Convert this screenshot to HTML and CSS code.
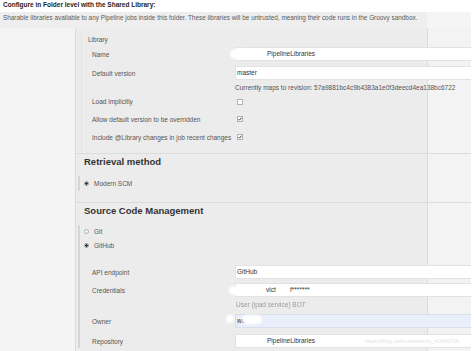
FILE: index.html
```html
<!DOCTYPE html>
<html>
<head>
<meta charset="utf-8">
<link rel="stylesheet" href="styles.css">
</head>
<body>
<div class="title">Configure in Folder level with the Shared Library:</div>
<div class="desc">Sharable libraries available to any Pipeline jobs inside this folder. These libraries will be untrusted, meaning their code runs in the Groovy sandbox.</div>
<div class="main">
  <div class="side"></div>
  <div class="content">
    <div class="lib">
      <div class="lib-title">Library</div>
      <div class="form">
        <div class="row r-in">
          <div class="label">Name</div>
          <div class="field"><div class="input"><span class="pre">-</span>PipelineLibraries</div><span class="blob b-name"></span></div>
        </div>
        <div class="row r-in gap5">
          <div class="label">Default version</div>
          <div class="field"><div class="input">master</div></div>
        </div>
        <div class="row r-info">
          <div class="label"></div>
          <div class="field info">Currently maps to revision: 57a9881bc4c9b4383a1e0f3deecd4ea138bc6722</div>
        </div>
        <div class="row r-load">
          <div class="label">Load implicitly</div>
          <div class="field"><span class="cb"></span></div>
        </div>
        <div class="row r-chk">
          <div class="label">Allow default version to be overridden</div>
          <div class="field"><span class="cb"><svg viewBox="0 0 6 6" width="4" height="4"><path d="M0.8 3.2 L2.4 4.8 L5.3 1" fill="none" stroke="#222" stroke-width="1.3"/></svg></span></div>
        </div>
        <div class="row r-chk">
          <div class="label">Include @Library changes in job recent changes</div>
          <div class="field"><span class="cb"><svg viewBox="0 0 6 6" width="4" height="4"><path d="M0.8 3.2 L2.4 4.8 L5.3 1" fill="none" stroke="#222" stroke-width="1.3"/></svg></span></div>
        </div>
      </div>
    </div>

    <div class="section s-retr">
      <h2>Retrieval method</h2>
      <div class="radios">
        <div class="radio r15"><span class="dot on"></span>Modern SCM</div>
      </div>
    </div>

    <div class="section s-scm">
      <h2>Source Code Management</h2>
      <div class="radios">
        <div class="radio r13"><span class="dot"></span>Git</div>
        <div class="radio r14"><span class="dot on"></span>GitHub</div>
        <div class="nested">
          <div class="row r-in">
            <div class="label">API endpoint</div>
            <div class="field"><div class="input">GitHub</div></div>
          </div>
          <div class="row r-in gap4">
            <div class="label">Credentials</div>
            <div class="field"><div class="input"><span class="pre c">&nbsp;</span><span class="user">vict</span>f*******</div><span class="blob b-cred"></span></div>
          </div>
          <div class="row r-user">
            <div class="label"></div>
            <div class="field hint">User (ipad service) BOT</div>
          </div>
          <div class="row r-in gap2">
            <div class="label">Owner</div>
            <div class="field"><div class="input auto">wu</div><span class="blob b-owner"></span><span class="blob b-owner2"></span></div>
          </div>
          <div class="row r-in gap6">
            <div class="label">Repository</div>
            <div class="field"><div class="input"><span class="pre">&nbsp;</span>PipelineLibraries</div><span class="mark">https://blog.csdn.net/weixin_41646716</span></div>
          </div>
        </div>
      </div>
    </div>
  </div>
  <div class="edge"></div>
</div>
</body>
</html>
```
FILE: styles.css
```css
* { box-sizing: border-box; margin: 0; padding: 0; }
html, body { width: 474px; height: 351px; overflow: hidden; background: #fff; }
body {
  font-family: "Liberation Sans", Arial, sans-serif;
  font-size: 6.5px;
  color: #555;
}
.title {
  height: 12px;
  line-height: 9px;
  padding-left: 3px;
  font-weight: bold;
  color: #1e1e1e;
  white-space: nowrap;
}
.desc {
  height: 16px;
  line-height: 12px;
  padding-left: 3px;
  font-size: 6.4px;
  white-space: nowrap;
  color: #5a5a5a;
  background: linear-gradient(to right, #eeeeee 0 427px, #f5f5f5 427px 471px, #fff 471px);
}
.main { display: flex; height: 323px; }
.side { width: 76px; background: #f4f4f4; border-right: 1px solid #dadada; }
.content {
  width: 395px;
  padding-top: 5px;
  background: linear-gradient(to right, #ececec 0 351px, #dcdcdc 351px 352px, #f3f3f3 352px);
}
.edge { flex: 1; background: #fff; }

.lib {
  margin-left: 5px;
  border-left: 1px solid #e2e2e2;
  padding-left: 6px;
  padding-bottom: 7px;
}
.lib-title { height: 14px; line-height: 14px; color: #555; }
.form { padding-left: 4px; }

.row {
  display: grid;
  grid-template-columns: 143px 1fr;
  align-items: center;
}
.r-in { height: 14px; }
.gap2 { margin-top: 2px; }
.gap4 { margin-top: 4px; }
.gap5 { margin-top: 5px; }
.gap6 { margin-top: 6px; }
.r-info { height: 12px; margin-top: 1px; }
.r-load { height: 17px; }
.r-chk { height: 18px; }
.r-user { height: 15px; }

.label { color: #555; white-space: nowrap; }
.field { position: relative; height: 100%; display: flex; align-items: center; }
.info { color: #555; white-space: nowrap; }
.hint { color: #9a9a9a; filter: blur(0.6px); padding-left: 1px; }

.input {
  width: 100%;
  height: 14px;
  line-height: 12px;
  background: #fff;
  border: 1px solid #e2e2e2;
  border-right: none;
  padding-left: 1px;
  color: #333;
  white-space: nowrap;
}
.input.auto { background: #e8effb; border-color: #d8dfeb; }
.pre { display: inline-block; width: 30px; padding-left: 2px; color: #666; }
.pre.c { width: 29px; }
.user { display: inline-block; width: 24px; }

.cb {
  display: inline-flex;
  align-items: center;
  justify-content: center;
  width: 6px;
  height: 6px;
  margin-left: 2px;
  border: 1px solid #b0b0b0;
  background: #fff;
}

.blob {
  position: absolute;
  background: #fff;
  border-radius: 6px;
  filter: blur(1px);
}
.b-name { left: -5px; top: 2px; width: 16px; height: 10px; }
.b-cred { left: -6px; top: 3px; width: 19px; height: 9px; }
.b-owner { left: 7px; top: 1px; width: 20px; height: 9px; }
.b-owner2 { left: -9px; top: 1px; width: 8px; height: 8px; }
.mark {
  position: absolute;
  left: 130px;
  top: 4px;
  font-size: 5.5px;
  color: #e3e3e3;
  white-space: nowrap;
}

.section { border-top: 1px solid #dcdcdc; }
.section h2 {
  margin-top: 1px;
  height: 14px;
  line-height: 14px;
  padding-left: 8px;
  font-size: 9.5px;
  font-weight: bold;
  color: #333;
}
.s-retr { padding-bottom: 11px; }
.radios {
  margin-top: 7px;
  margin-left: 2px;
  border-left: 2px solid #d6d6d6;
  padding-left: 4px;
}
.radio { display: flex; align-items: center; color: #555; }
.r13 { height: 13px; }
.r14 { height: 14px; }
.r15 { height: 15px; }
.dot {
  display: inline-block;
  width: 5px;
  height: 5px;
  margin-right: 5px;
  border-radius: 50%;
  border: 1px solid #b0b0b0;
  background: #f6f6f6;
}
.dot.on { background: radial-gradient(circle, #333 0 1.1px, #f6f6f6 1.5px); border-color: #999; }
.nested { margin-left: 8px; padding-top: 13px; }
```
